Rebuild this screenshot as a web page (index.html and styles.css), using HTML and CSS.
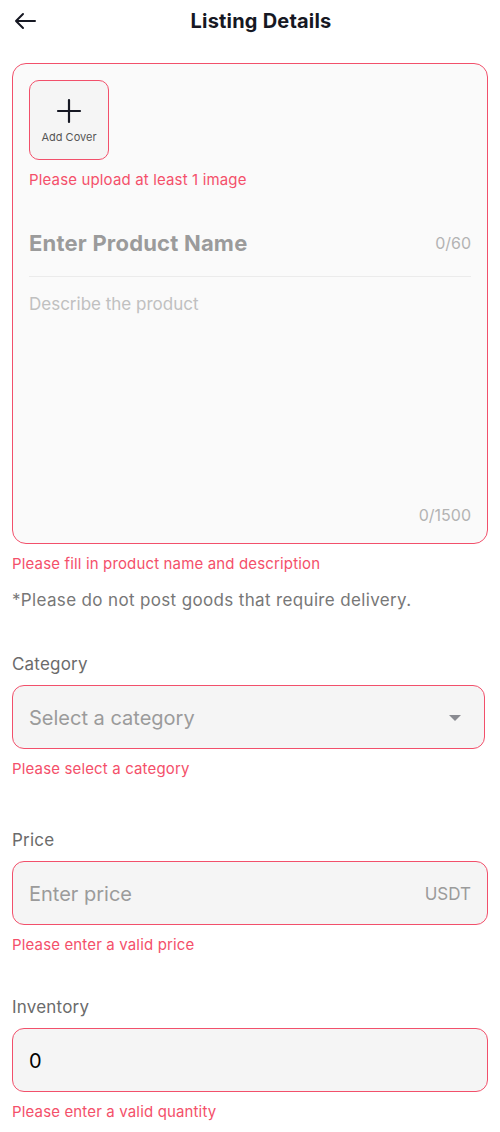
FILE: index.html
```html
<!DOCTYPE html>
<html lang="en">
<head>
    <meta charset="UTF-8">
    <meta name="viewport" content="width=device-width, initial-scale=1.0">
    <title>Listing Details</title>
    <link rel="stylesheet" href="styles.css">
</head>
<body>
    <div class="header">
        <svg class="back" width="24" height="24" viewBox="0 0 24 24" fill="none" stroke="#161823" stroke-width="2" stroke-linecap="round" stroke-linejoin="round">
            <path d="M22 12H3M10 5l-7 7 7 7"/>
        </svg>
        <h1>Listing Details</h1>
    </div>

    <div class="page">
        <div class="card">
            <div class="cover">
                <svg width="26" height="26" viewBox="0 0 26 26" stroke="#161823" stroke-width="2.2" stroke-linecap="round">
                    <path d="M13 2v22M2 13h22"/>
                </svg>
                <span>Add Cover</span>
            </div>
            <p class="error">Please upload at least 1 image</p>

            <div class="name-row">
                <span class="name">Enter Product Name</span>
                <span class="count">0/60</span>
            </div>

            <div class="desc">
                <span class="desc-text">Describe the product</span>
                <span class="count">0/1500</span>
            </div>
        </div>
        <p class="error">Please fill in product name and description</p>
        <p class="note">*Please do not post goods that require delivery.</p>

        <label class="label first">Category</label>
        <div class="field select">
            <span class="placeholder">Select a category</span>
            <svg width="12" height="8" viewBox="0 0 12 8"><path d="M0 1h12L6 7z" fill="#8a8b91"/></svg>
        </div>
        <p class="error">Please select a category</p>

        <label class="label wide">Price</label>
        <div class="field">
            <span class="placeholder">Enter price</span>
            <span class="unit">USDT</span>
        </div>
        <p class="error">Please enter a valid price</p>

        <label class="label">Inventory</label>
        <div class="field">
            <span class="value">0</span>
        </div>
        <p class="error">Please enter a valid quantity</p>
    </div>
</body>
</html>
```

FILE: styles.css
```css
body {
    margin: 0;
    background-color: #fff;
    font-family: Inter, "Open Sans", sans-serif;
    color: #161823;
}
p {
    margin: 0;
}
.header {
    height: 42px;
    display: flex;
    align-items: center;
    justify-content: center;
    position: relative;
}
.header .back {
    position: absolute;
    left: 13px;
    top: 9px;
}
.header h1 {
    margin: 0;
    font-size: 20px;
    font-weight: 700;
    letter-spacing: 0.2px;
    padding-left: 22px;
}
.page {
    padding: 21px 12px 0;
}
.card {
    border: 1px solid #f2506b;
    border-radius: 14px;
    background-color: #fafafa;
    padding: 16px 16px 16px;
    display: flex;
    flex-direction: column;
}
.cover {
    width: 80px;
    height: 80px;
    box-sizing: border-box;
    border: 1px solid #f2506b;
    border-radius: 10px;
    background-color: #f5f5f5;
    display: flex;
    flex-direction: column;
    align-items: center;
    padding-top: 17px;
}
.cover span {
    margin-top: 6px;
    font-size: 11px;
    line-height: 15px;
    color: #555;
}
.error {
    margin-top: 10px;
    font-size: 15px;
    line-height: 20px;
    letter-spacing: 0.15px;
    color: #f4506a;
}
.name-row {
    margin-top: 20px;
    height: 66px;
    border-bottom: 1px solid #ebebeb;
    display: flex;
    align-items: center;
    justify-content: space-between;
}
.name {
    font-size: 22px;
    font-weight: 700;
    letter-spacing: 0.2px;
    color: #9b9b9b;
}
.count {
    font-size: 16px;
    color: #b3b3b3;
}
.desc {
    height: 248px;
    padding-bottom: 2px;
    display: flex;
    flex-direction: column;
    justify-content: space-between;
}
.desc-text {
    margin-top: 15px;
    font-size: 17px;
    line-height: 24px;
    color: #c0c0c0;
}
.desc .count {
    align-self: flex-end;
    line-height: 20px;
}
.note {
    margin-top: 14px;
    font-size: 17px;
    line-height: 24px;
    letter-spacing: 0.35px;
    color: #777;
}
.label {
    display: block;
    margin-top: 40px;
    font-size: 17px;
    line-height: 24px;
    letter-spacing: 0.2px;
    color: #6b6b6b;
}
.label.wide {
    margin-top: 49px;
}
.field {
    margin-top: 9px;
    height: 64px;
    box-sizing: border-box;
    border: 1px solid #f2506b;
    border-radius: 12px;
    background-color: #f5f5f5;
    padding: 1px 16px 0;
    display: flex;
    align-items: center;
    justify-content: space-between;
}
.field.select {
    margin-right: 3px;
    padding-right: 23px;
}
.placeholder {
    font-size: 20px;
    color: #9b9b9b;
}
.unit {
    font-size: 17px;
    color: #9b9b9b;
}
.value {
    font-size: 20px;
    color: #000;
}
```
